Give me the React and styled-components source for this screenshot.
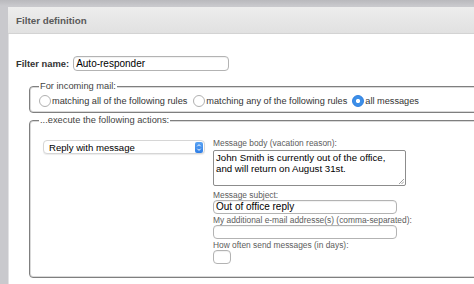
import React from "react";
import styled, { createGlobalStyle } from "styled-components";

const GlobalStyle = createGlobalStyle`
  html, body {
    margin: 0;
    padding: 0;
    background: #c9c9cd;
    overflow: hidden;
    font-family: "Liberation Sans", Arial, sans-serif;
  }
`;

const Page = styled.div`
  width: 474px;
  height: 284px;
  padding: 7px 0 0 8px;
  box-sizing: border-box;
  background: linear-gradient(#b9b9bd, #c9c9cd 6px);
  overflow: hidden;
`;

const Panel = styled.div`
  background: #fff;
  height: 100%;
  box-shadow: inset 1px 0 0 #e2e2e4;
`;

const Header = styled.div`
  height: 26px;
  display: flex;
  align-items: center;
  padding-left: 8px;
  background: linear-gradient(#ededed, #e1e1e1);
  border-bottom: 1px solid #d3d3d3;
  font-size: 9.8px;
  font-weight: bold;
  color: #5a5a5a;
`;

const Body = styled.div`
  padding: 22px 0 0 8px;
`;

const NameRow = styled.div`
  display: flex;
  align-items: center;
  gap: 4px;
  margin-bottom: 10px;
`;

const BoldLabel = styled.label`
  font-size: 9.4px;
  font-weight: bold;
  color: #333;
`;

const TextInput = styled.div`
  box-sizing: border-box;
  width: ${(p) => p.$w}px;
  height: ${(p) => p.$h || 15}px;
  border: 1px solid #b3b3b3;
  border-radius: 4px;
  padding: 0 2px;
  font-size: 10px;
  line-height: ${(p) => (p.$h || 15) - 2}px;
  color: #000;
  background: #fff;
  box-shadow: inset 0 1px 1px rgba(0, 0, 0, 0.06);
`;

const Fieldset = styled.fieldset`
  margin: ${(p) => p.$mt || 0}px -20px 0 13px;
  padding: ${(p) => p.$pad};
  border: 1px solid #7f7f7f;
  border-radius: 4px;
  box-shadow: inset 0 0 0 1px #d9d9d9;
  min-width: 0;
`;

const Legend = styled.legend`
  padding: 0 1px;
  margin: 0;
  background: #fff;
  font-size: 9.3px;
  color: #444;
  line-height: 10px;
`;

const RadioRow = styled.div`
  display: flex;
  align-items: center;
  height: 11px;
  font-size: 9.2px;
  color: #333;
`;

const Radio = styled.span`
  width: 12px;
  height: 12px;
  border-radius: 50%;
  box-sizing: border-box;
  margin: 0 1px 0 ${(p) => p.$ml || 0}px;
  border: 1px solid ${(p) => (p.$on ? "#2f7fe0" : "#b0b0b0")};
  background: ${(p) =>
    p.$on ? "radial-gradient(circle, #fff 0 1.8px, #3d8fe8 2.4px)" : "#fff"};
  flex: none;
`;

const Actions = styled.div`
  display: flex;
  gap: 8px;
`;

const Select = styled.div`
  margin: 2px 0 0 4px;
  width: 162px;
  height: 14px;
  box-sizing: border-box;
  display: flex;
  align-items: center;
  justify-content: space-between;
  padding: 0 1px 0 5px;
  border: 1px solid #d6d6d6;
  border-radius: 4px;
  background: #fff;
  box-shadow: 0 1px 1px rgba(0, 0, 0, 0.08);
  font-size: 9.6px;
  color: #000;
`;

const Stepper = styled.span`
  width: 8px;
  height: 11px;
  border-radius: 2px;
  background: linear-gradient(#5aa3f3, #2f7ee6);
  display: flex;
  align-items: center;
  justify-content: center;
`;

const Column = styled.div`
  display: flex;
  flex-direction: column;
`;

const SmallLabel = styled.div`
  font-size: 8.4px;
  line-height: 10px;
  color: #5c5c5c;
  margin-top: ${(p) => p.$mt || 0}px;
  white-space: nowrap;
`;

const TextArea = styled.div`
  position: relative;
  box-sizing: border-box;
  width: 193px;
  height: 36px;
  margin-top: 2px;
  border: 1px solid #8c8c8c;
  border-radius: 2px;
  padding: 1px 2px;
  font-size: 9.7px;
  line-height: 11px;
  color: #000;
`;

const Grip = styled.svg`
  position: absolute;
  right: 1px;
  bottom: 1px;
`;

export default function App() {
  return (
    <>
      <GlobalStyle />
      <Page>
        <Panel>
          <Header>Filter definition</Header>
          <Body>
            <NameRow>
              <BoldLabel>Filter name:</BoldLabel>
              <TextInput $w={156}>Auto-responder</TextInput>
            </NameRow>
            <Fieldset $pad="4px 0 6px 9px">
              <Legend>For incoming mail:</Legend>
              <RadioRow>
                <Radio />
                matching all of the following rules
                <Radio $ml={6} />
                matching any of the following rules
                <Radio $ml={5} $on />
                all messages
              </RadioRow>
            </Fieldset>
            <Fieldset $mt={2} $pad="13px 0 13px 9px">
              <Legend>...execute the following actions:</Legend>
              <Actions>
                <Select>
                  Reply with message
                  <Stepper>
                    <svg width="6" height="9" viewBox="0 0 6 9">
                      <path
                        d="M1.3 3.3 3 1.6 4.7 3.3M1.3 5.7 3 7.4 4.7 5.7"
                        fill="none"
                        stroke="#fff"
                        strokeWidth="1"
                      />
                    </svg>
                  </Stepper>
                </Select>
                <Column>
                  <SmallLabel>Message body (vacation reason):</SmallLabel>
                  <TextArea>
                    John Smith is currently out of the office,
                    <br />
                    and will return on August 31st.
                    <Grip width="6" height="6" viewBox="0 0 6 6">
                      <path d="M1 6 6 1M3.5 6 6 3.5" stroke="#888" strokeWidth="0.8" />
                    </Grip>
                  </TextArea>
                  <SmallLabel $mt={4}>Message subject:</SmallLabel>
                  <TextInput $w={184} $h={14}>Out of office reply</TextInput>
                  <SmallLabel $mt={1}>
                    My additional e-mail addresse(s) (comma-separated):
                  </SmallLabel>
                  <TextInput $w={184} $h={14} />
                  <SmallLabel $mt={1}>How often send messages (in days):</SmallLabel>
                  <TextInput $w={18} $h={14} />
                </Column>
              </Actions>
            </Fieldset>
          </Body>
        </Panel>
      </Page>
    </>
  );
}
